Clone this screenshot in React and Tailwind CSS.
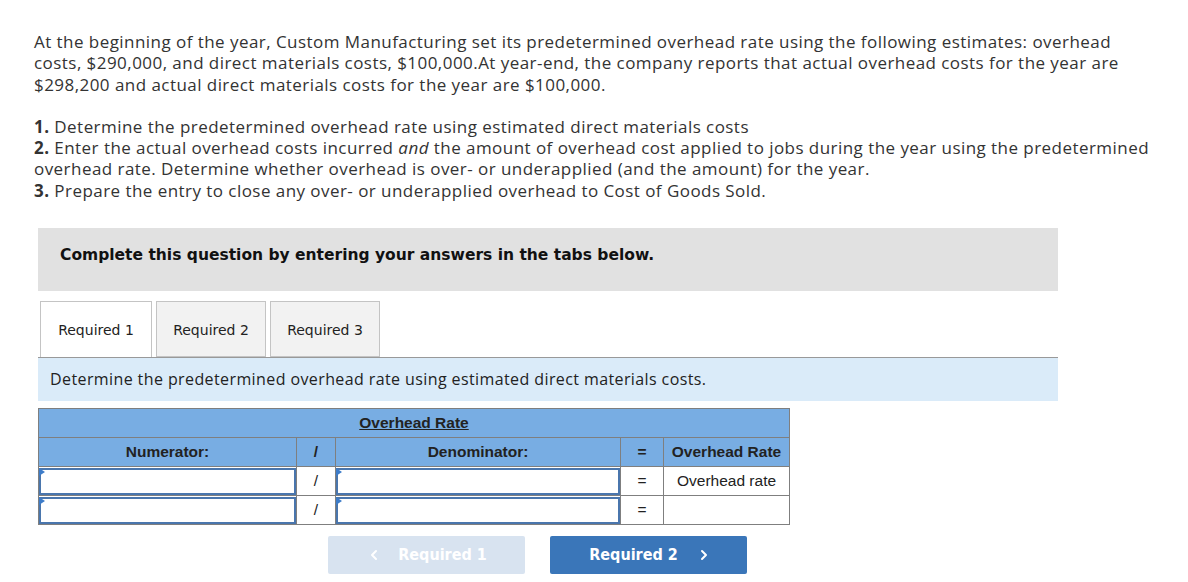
import React from 'react';
import { ChevronLeft, ChevronRight } from 'lucide-react';

const Tab = ({ label, active }) => (
  <div
    className={
      'flex items-center justify-center h-[56px] pt-[3px] border border-[#c4c4c4] text-[14px] text-[#222] font-["DejaVu_Sans",sans-serif] ' +
      (active ? 'bg-white border-[#aaa] border-b-0 w-[112px] -mb-[1px] relative z-10' : 'bg-[#f2f2f2] w-[110px]')
    }
  >
    {label}
  </div>
);

const InputCell = () => (
  <td className="border border-[#7f7f7f] p-0 h-[28px]">
    <div className="relative h-[27px] border-2 border-[#4a76ad] bg-white">
      <span className="absolute left-[-2px] top-[-2px] w-0 h-0 border-t-[4px] border-b-[4px] border-l-[6px] border-t-transparent border-b-transparent border-l-[#3d7cc9]" />
    </div>
  </td>
);

export default function App() {
  return (
    <div className="pl-[34px] pt-[31px] pb-6 text-[#333] font-['Open_Sans',sans-serif] text-[17px] leading-[21.3px] bg-white min-h-screen">
      <div className="tracking-[0.45px] whitespace-nowrap">
        <p>
          At the beginning of the year, Custom Manufacturing set its predetermined overhead rate using the following estimates: overhead
          <br />
          costs, $290,000, and direct materials costs, $100,000.At year-end, the company reports that actual overhead costs for the year are
          <br />
          $298,200 and actual direct materials costs for the year are $100,000.
        </p>

        <div className="mt-[21px]">
          <div><b>1.</b> Determine the predetermined overhead rate using estimated direct materials costs</div>
          <div>
            <b>2.</b> Enter the actual overhead costs incurred <i>and</i> the amount of overhead cost applied to jobs during the year using the predetermined
          </div>
          <div>overhead rate. Determine whether overhead is over- or underapplied (and the amount) for the year.</div>
          <div><b>3.</b> Prepare the entry to close any over- or underapplied overhead to Cost of Goods Sold.</div>
        </div>
      </div>

      <div className="ml-[4px] mt-[27px] w-[1020px] h-[63px] bg-[#e1e1e1] pt-[17px] pl-[22px]">
        <div className="font-['DejaVu_Sans',sans-serif] font-bold text-[15.5px] leading-[20px] text-[#111]">
          Complete this question by entering your answers in the tabs below.
        </div>
      </div>

      <div className="ml-[4px] mt-[10px] w-[1020px]">
        <div className="flex gap-[4px] pl-[2px] border-b border-[#999]">
          <Tab label="Required 1" active />
          <Tab label="Required 2" />
          <Tab label="Required 3" />
        </div>
        <div className="h-[43px] bg-[#daebf9] flex items-center pl-[12px] text-[16px] tracking-[0.4px] text-[#222]">
          Determine the predetermined overhead rate using estimated direct materials costs.
        </div>
      </div>

      <table className="ml-[4px] mt-[7px] border-collapse font-['Liberation_Sans',sans-serif] text-[15.5px] text-[#222] table-fixed w-[751px]">
        <colgroup>
          <col className="w-[258px]" />
          <col className="w-[39px]" />
          <col className="w-[285px]" />
          <col className="w-[43px]" />
          <col className="w-[126px]" />
        </colgroup>
        <tbody>
          <tr className="bg-[#78ade3] h-[29px]">
            <td colSpan={5} className="border border-[#7f7f7f] text-center font-bold underline">Overhead Rate</td>
          </tr>
          <tr className="bg-[#78ade3] h-[29px] font-bold">
            <td className="border border-[#7f7f7f] text-center">Numerator:</td>
            <td className="border border-[#7f7f7f] text-center">/</td>
            <td className="border border-[#7f7f7f] text-center">Denominator:</td>
            <td className="border border-[#7f7f7f] text-center">=</td>
            <td className="border border-[#7f7f7f] text-center">Overhead Rate</td>
          </tr>
          <tr className="h-[29px]">
            <InputCell />
            <td className="border border-[#7f7f7f] text-center">/</td>
            <InputCell />
            <td className="border border-[#7f7f7f] text-center">=</td>
            <td className="border border-[#7f7f7f] text-center">Overhead rate</td>
          </tr>
          <tr className="h-[29px]">
            <InputCell />
            <td className="border border-[#7f7f7f] text-center">/</td>
            <InputCell />
            <td className="border border-[#7f7f7f] text-center">=</td>
            <td className="border border-[#7f7f7f] text-center"></td>
          </tr>
        </tbody>
      </table>

      <div className="flex gap-[25px] mt-[11px] ml-[294px] font-['DejaVu_Sans_Condensed','DejaVu_Sans',sans-serif] font-bold text-[16px] text-white">
        <button className="w-[197px] h-[38px] rounded-[2px] bg-[#d8e3f0] flex items-center justify-center gap-[16px]">
          <ChevronLeft size={16} strokeWidth={3} />
          <span>Required 1</span>
        </button>
        <button className="w-[197px] h-[38px] rounded-[2px] bg-[#3a76b9] flex items-center justify-center gap-[18px] pl-[4px]">
          <span>Required 2</span>
          <ChevronRight size={16} strokeWidth={3} />
        </button>
      </div>
    </div>
  );
}
